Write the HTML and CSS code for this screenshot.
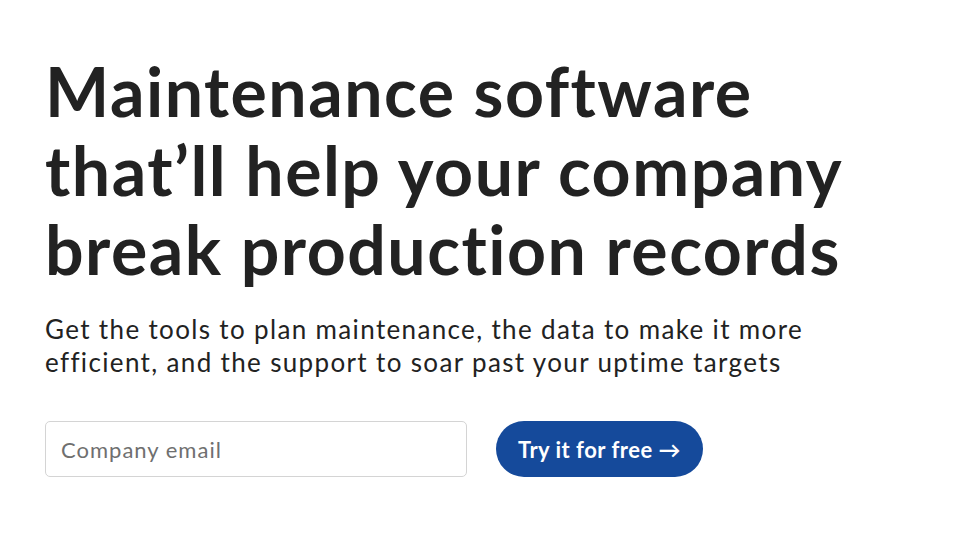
FILE: index.html
```html
<!DOCTYPE html>
<html lang="en">
<head>
<meta charset="utf-8">
<title>Maintenance software</title>
<link rel="stylesheet" href="styles.css">
</head>
<body>
<main class="hero">
  <h1 class="hero-title">Maintenance software<br>that’ll help your company<br>break production records</h1>
  <p class="hero-sub">Get the tools to plan maintenance, the data to make it more<br>efficient, and the support to soar past your uptime targets</p>
  <form class="signup">
    <input class="email" type="email" placeholder="Company email">
    <button class="cta" type="button">Try it for free →</button>
  </form>
</main>
</body>
</html>
```
FILE: styles.css
```css
html, body {
  margin: 0;
  padding: 0;
  background: #ffffff;
}
body {
  font-family: Lato, "Noto Sans", sans-serif;
  color: #222222;
  font-variant-ligatures: none;
}
.hero {
  padding: 51px 0 0 45px;
}
.hero-title {
  margin: 0;
  font-size: 68px;
  line-height: 79px;
  font-weight: 700;
  color: #222222;
  letter-spacing: 1.5px;
}
.hero-sub {
  margin: 25px 0 0 0;
  font-size: 26px;
  line-height: 33px;
  font-weight: 400;
  color: #222222;
  letter-spacing: 1.35px;
}
.signup {
  display: flex;
  gap: 29px;
  margin-top: 42px;
}
.email {
  box-sizing: border-box;
  width: 422px;
  height: 56px;
  border: 1px solid #d4d4d4;
  border-radius: 5px;
  padding: 0 15px;
  font-family: inherit;
  font-size: 22px;
  letter-spacing: 1px;
  color: #222;
}
.email::placeholder {
  color: #6f6f6f;
}
.cta {
  box-sizing: border-box;
  width: 207px;
  height: 56px;
  border: 0;
  border-radius: 28px;
  background: #154a9b;
  color: #ffffff;
  font-family: inherit;
  font-weight: 700;
  font-size: 22px;
  letter-spacing: 0.5px;
  padding: 0;
}
```
